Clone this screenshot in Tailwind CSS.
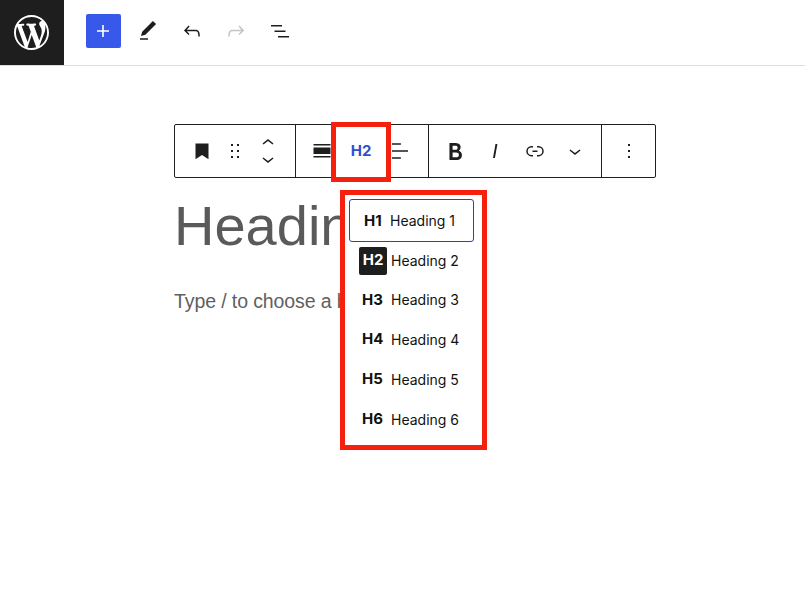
<!DOCTYPE html>
<html lang="en">
	<head>
		<meta charset="UTF-8" />
		<title>Heading block</title>
		<script src="https://cdn.jsdelivr.net/npm/@tailwindcss/browser@4"></script>
	</head>
	<body class="bg-white font-['Inter',sans-serif] text-[#111]">
		<div class="relative w-[805px] h-[600px] overflow-hidden">
			<header class="flex items-start h-[66px] border-b border-[#dcdcdc]">
				<div class="flex items-center justify-center w-16 h-[65px] bg-[#1e1e1e]">
					<svg class="w-[35px] h-[35px] -mt-[1px] -ml-[2px]" viewBox="0 0 20 20" fill="#fff"><path d="M20 10c0-5.51-4.49-10-10-10C4.48 0 0 4.49 0 10c0 5.52 4.48 10 10 10 5.51 0 10-4.48 10-10zM7.78 15.37L4.37 6.22c.55-.02 1.17-.08 1.17-.08.5-.06.44-1.13-.06-1.11 0 0-1.45.11-2.37.11-.18 0-.37 0-.58-.01C4.12 2.69 6.87 1.11 10 1.11c2.33 0 4.45.87 6.05 2.34-.68-.11-1.65.39-1.65 1.58 0 .74.45 1.36.9 2.1.35.61.55 1.36.55 2.46 0 1.49-1.4 5-1.4 5l-3.03-8.37c.54-.02.82-.17.82-.17.5-.05.44-1.25-.06-1.22 0 0-1.44.12-2.38.12-.87 0-2.33-.12-2.33-.12-.5-.03-.56 1.2-.06 1.22l.92.08 1.26 3.41zM17.41 10c.24-.64.74-1.87.43-4.25.7 1.29 1.05 2.71 1.05 4.25 0 3.29-1.73 6.24-4.4 7.78.97-2.59 1.94-5.2 2.92-7.78zM6.1 18.09C3.12 16.65 1.11 13.53 1.11 10c0-1.3.23-2.48.72-3.59C3.25 10.3 4.67 14.2 6.1 18.09zm4.03-6.63l2.58 6.98c-.86.29-1.76.45-2.71.45-.79 0-1.57-.11-2.29-.33.81-2.38 1.62-4.74 2.42-7.1z" /></svg>
				</div>
				<div class="flex items-center h-[34px] mt-[14px]">
					<div class="flex items-center justify-center w-[35px] h-[34px] ml-[22px] rounded-[2px] bg-[#3858e9]">
						<svg class="w-6 h-6 -ml-[1px]" viewBox="0 0 24 24" fill="#fff"><path d="M18 11.2h-5.2V6h-1.6v5.2H6v1.6h5.2V18h1.600v-5.2H18z" /></svg>
					</div>
					<svg class="w-6 h-6 ml-[15px]" viewBox="0 0 24 24" fill="#1e1e1e"><path d="M20.1 5.1L16.9 2 6.2 12.7l-1.3 4.4 4.5-1.3L20.1 5.1zM4 20.8h8v-1.5H4v1.500z" /></svg>
					<svg class="w-6 h-6 ml-[20px]" viewBox="0 0 24 24" fill="#1e1e1e"><path d="M18.3 11.7c-.6-.6-1.4-.9-2.3-.9H6.7l2.9-3.3-1.1-1-4.5 5L8.5 16l1-1-2.7-2.7H16c.5 0 .9.2 1.3.5 1 1 1 3.4 1 4.5v.3h1.5v-.2c0-1.5 0-4.3-1.5-5.7z" /></svg>
					<svg class="w-6 h-6 ml-[20px]" viewBox="0 0 24 24" fill="#c4c4c4"><path d="M15.6 6.5l-1.1 1 2.9 3.3H8c-.9 0-1.7.3-2.3.9-1.4 1.5-1.4 4.2-1.4 5.6v.2h1.5v-.3c0-1.1 0-3.5 1-4.5.3-.3.7-.5 1.3-.5h9.2L14.5 15l1.1 1.1 4.6-4.6-4.6-5z" /></svg>
					<svg class="w-6 h-6 ml-[20px]" viewBox="0 0 24 24" fill="#1e1e1e"><path d="M3 6h11v1.5H3V6Zm3.5 5.5h11V13h-11v-1.5ZM21 17H10v1.5h11V17Z" /></svg>
				</div>
			</header>

			<main class="ml-[174px] w-[482px]">
				<div class="flex items-stretch h-[54px] mt-[58px] border border-[#1e1e1e] rounded-[2px]">
					<div class="flex items-center w-[121px] shrink-0 pl-[15px] border-r border-[#1e1e1e]">
						<svg class="w-6 h-6" viewBox="0 0 24 24" fill="#1e1e1e"><path d="M5.500 4.500h13v15.800L12 15.900l-6.500 4.400z" /></svg>
						<svg class="w-6 h-6 ml-[9px]" viewBox="0 0 24 24" fill="#1e1e1e"><path d="M8 7h2V5H8v2zm0 6h2v-2H8v2zm0 6h2v-2H8v2zm6-14v2h2V5h-2zm0 8h2v-2h-2v2zm0 6h2v-2h-2v2z" /></svg>
						<div class="flex flex-col ml-[9px]">
							<svg class="w-6 h-6 -mb-[4px]" viewBox="0 0 24 24" fill="#1e1e1e"><path d="M6.500 12.400L12 8l5.500 4.400-.9 1.200L12 10l-4.500 3.600-1-1.200z" /></svg>
							<svg class="w-6 h-6 -mt-[4px]" viewBox="0 0 24 24" fill="#1e1e1e"><path d="M17.500 11.600L12 16l-5.500-4.400.9-1.200L12 14l4.600-3.600 1 1.200z" /></svg>
						</div>
					</div>
					<div class="flex items-center w-[133px] shrink-0 border-r border-[#1e1e1e]">
						<svg class="w-6 h-6 ml-[14px]" viewBox="0 0 24 24" fill="#1e1e1e"><path d="M3.500 5h17v1.500h-17zM3.500 8.500h17v6.500h-17zM3.500 17h17v1.500h-17z" /></svg>
						<span class="w-[54px] text-center text-[15px] font-bold text-[#2f4fd0] mt-[1px]">H2</span>
						<svg class="w-6 h-6" viewBox="0 0 24 24" fill="#1e1e1e"><path d="M4 19.800h8.900v-1.500H4v1.500zm8.900-15.600H4v1.500h8.900V4.200zm-8.900 7v1.500h16v-1.500H4z" /></svg>
					</div>
					<div class="flex items-center w-[173px] shrink-0 pl-[12px] border-r border-[#1e1e1e]">
						<svg class="w-[29px] h-[29px]" viewBox="0 0 24 24" fill="#1e1e1e"><path d="M14.700 11.300c1-.6 1.500-1.600 1.500-3 0-2.300-1.700-3.300-5.300-3.300H7v14h5.800c1.400 0 2.500-.3 3.300-1 .8-.7 1.200-1.700 1.200-2.900.1-1.900-.8-3.100-2.600-3.800zm-5.100-4h2.300c.6 0 1.100.1 1.400.4.3.3.5.7.5 1.200s-.2 1-.5 1.200c-.3.3-.8.4-1.400.4H9.600V7.300zm4.600 9c-.4.3-1 .4-1.700.4H9.600v-3.900h2.900c.7 0 1.300.2 1.700.5.400.3.600.8.600 1.500s-.2 1.200-.6 1.500z" /></svg>
						<svg class="w-6 h-6 ml-[13px]" viewBox="0 0 24 24" fill="#1e1e1e"><path d="M12.500 5L10 19h1.900l2.500-14z" /></svg>
						<svg class="w-6 h-6 ml-[16px]" viewBox="0 0 24 24" fill="#1e1e1e"><path d="M10 17.389H8.444A5.194 5.194 0 1 1 8.444 7H10v1.500H8.444a3.694 3.694 0 0 0 0 7.389H10v1.500ZM14 7h1.556a5.194 5.194 0 0 1 0 10.390H14v-1.500h1.556a3.694 3.694 0 0 0 0-7.390H14V7Zm-4.500 6h5v-1.500h-5V13Z" /></svg>
						<svg class="w-6 h-6 ml-[16px]" viewBox="0 0 24 24" fill="#1e1e1e"><path d="M17.500 11.600L12 16l-5.500-4.400.9-1.200L12 14l4.600-3.600 1 1.200z" /></svg>
					</div>
					<div class="flex items-center justify-center flex-1">
						<svg class="w-6 h-6" viewBox="0 0 24 24" fill="#1e1e1e"><path d="M13 19h-2v-2h2v2zm0-6h-2v-2h2v2zm0-6h-2V5h2v2z" /></svg>
					</div>
				</div>
				<h1 class="mt-[14px] text-[56px] leading-[68px] font-normal text-[#5a5a5a] font-['Liberation_Sans',sans-serif]">Heading</h1>
				<p class="mt-[27px] text-[19.5px] leading-[28px] tracking-[-0.1px] text-[#5f5f5f] font-['Liberation_Sans',sans-serif]">Type / to choose a block</p>
			</main>

			<!-- red highlight round the H2 button -->
			<div class="absolute left-[331px] top-[122px] w-[60px] h-[60px] border-[5px] border-[#f5200e]"></div>

			<!-- heading level menu -->
			<div class="absolute left-[340px] top-[190px] w-[147px] h-[260px] bg-white border-[5px] border-[#f5200e] pt-[4px] pl-[4px] text-[15px] font-bold">
				<div class="flex items-center w-[125px] h-[43px] border-[1.5px] border-[#2145c8] rounded-[3px] pl-[14px]">
					<span class="w-[26px] mt-[1px]">H1</span>
					<span class="text-[14px] font-normal">Heading 1</span>
				</div>
				<div class="flex items-center h-[39px] pl-[10px] mt-[-1px]">
					<span class="flex items-center justify-center w-[28px] h-[28px] rounded-[2px] bg-[#1e1e1e] text-white">H2</span>
					<span class="ml-[4px] text-[14px] font-normal">Heading 2</span>
				</div>
				<div class="flex items-center h-[39px] pl-[13px]">
					<span class="w-[29px] mt-[1px]">H3</span>
					<span class="text-[14px] font-normal">Heading 3</span>
				</div>
				<div class="flex items-center h-[40px] pl-[13px]">
					<span class="w-[29px] mt-[1px]">H4</span>
					<span class="text-[14px] font-normal">Heading 4</span>
				</div>
				<div class="flex items-center h-[40px] pl-[13px]">
					<span class="w-[29px] mt-[1px]">H5</span>
					<span class="text-[14px] font-normal">Heading 5</span>
				</div>
				<div class="flex items-center h-[40px] pl-[13px]">
					<span class="w-[29px] mt-[1px]">H6</span>
					<span class="text-[14px] font-normal">Heading 6</span>
				</div>
			</div>
		</div>
	</body>
</html>
